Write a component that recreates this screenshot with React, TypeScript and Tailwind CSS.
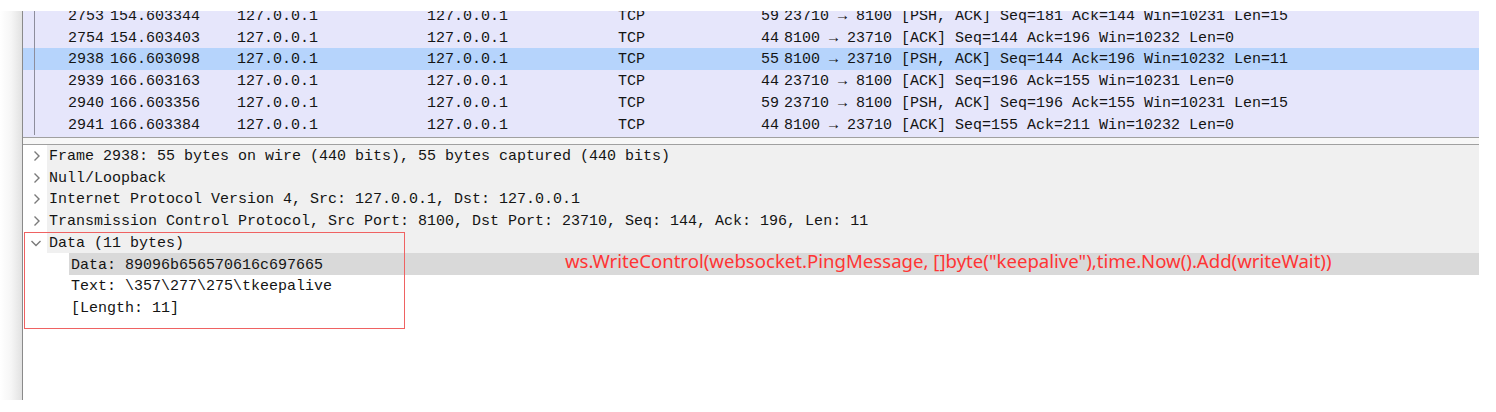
import React from 'react';

const packets = [
  { no: '2753', time: '154.603344', len: '59', info: '23710 → 8100 [PSH, ACK] Seq=181 Ack=144 Win=10231 Len=15' },
  { no: '2754', time: '154.603403', len: '44', info: '8100 → 23710 [ACK] Seq=144 Ack=196 Win=10232 Len=0' },
  { no: '2938', time: '166.603098', len: '55', info: '8100 → 23710 [PSH, ACK] Seq=144 Ack=196 Win=10232 Len=11', selected: true },
  { no: '2939', time: '166.603163', len: '44', info: '23710 → 8100 [ACK] Seq=196 Ack=155 Win=10231 Len=0' },
  { no: '2940', time: '166.603356', len: '59', info: '23710 → 8100 [PSH, ACK] Seq=196 Ack=155 Win=10231 Len=15' },
  { no: '2941', time: '166.603384', len: '44', info: '8100 → 23710 [ACK] Seq=155 Ack=211 Win=10232 Len=0' },
];

const tree = [
  'Frame 2938: 55 bytes on wire (440 bits), 55 bytes captured (440 bits)',
  'Null/Loopback',
  'Internet Protocol Version 4, Src: 127.0.0.1, Dst: 127.0.0.1',
  'Transmission Control Protocol, Src Port: 8100, Dst Port: 23710, Seq: 144, Ack: 196, Len: 11',
];

function Chevron({ open }: { open?: boolean }) {
  return (
    <svg width="12" height="12" viewBox="0 0 12 12" fill="none" stroke="#7a7a7a" strokeWidth="1.4">
      {open ? <polyline points="1.5,4 6,8.5 10.5,4" /> : <polyline points="3.5,1.5 8,6 3.5,10.5" />}
    </svg>
  );
}

export default function App() {
  return (
    <div
      className="relative h-[412px] w-[1496px] overflow-hidden bg-white text-[15px] text-[#141414]"
      style={{ fontFamily: '"Liberation Mono", "DejaVu Sans Mono", monospace' }}
    >
      <div className="h-[11px]" />

      <div className="flex h-[389px]">
        <div className="w-[22px] bg-gradient-to-r from-white via-[#f6f6f6] to-[#e2e2e2]" />

        <div className="flex w-[1457px] flex-col border-l border-[#8a8a8a]">
          {/* packet list */}
          <div className="h-[127px] shrink-0 overflow-hidden border-b border-[#a0a0a0] bg-[#e6e6fb]">
            <div className="-mt-[6px]">
              {packets.map((p) => (
                <div
                  key={p.no}
                  className={`flex h-[21.7px] items-center whitespace-pre pt-[3px] ${p.selected ? 'bg-[#b6d4fc]' : ''}`}
                >
                  <div className="-mt-[3px] h-[21.7px] w-[12px] shrink-0 border-r border-[#8d8d9c]" />
                  <div className="w-[70px] shrink-0 pr-[1px] text-right">{p.no}</div>
                  <div className="w-[132px] shrink-0 pl-[5px]">{p.time}</div>
                  <div className="w-[190px] shrink-0">127.0.0.1</div>
                  <div className="w-[191px] shrink-0">127.0.0.1</div>
                  <div className="w-[122px] shrink-0">TCP</div>
                  <div className="w-[39px] shrink-0 text-right">{p.len}</div>
                  <div className="pl-[5px]">{p.info}</div>
                </div>
              ))}
            </div>
          </div>

          {/* splitter */}
          <div className="h-[7px] shrink-0 border-b border-[#a0a0a0] bg-[#f7f7f7]" />

          {/* details tree */}
          <div className="flex-1">
            {tree.map((t) => (
              <div key={t} className="flex h-[21.7px] items-center whitespace-pre">
                <div className="flex w-[24px] shrink-0 items-center justify-center pl-[3px]">
                  <Chevron />
                </div>
                <div className="flex h-full flex-1 items-center bg-[#f0f0f0] pl-[2px] pt-[3px]">{t}</div>
              </div>
            ))}
            <div className="flex h-[21.7px] items-center whitespace-pre">
              <div className="flex w-[24px] shrink-0 items-center justify-center pl-[1px]">
                <Chevron open />
              </div>
              <div className="flex h-full flex-1 items-center bg-[#f0f0f0] pl-[2px] pt-[3px]">Data (11 bytes)</div>
            </div>
            <div className="flex h-[21.7px] items-center whitespace-pre pl-[46px]">
              <div className="flex h-full flex-1 items-center bg-[#d9d9d9] pl-[2px] pt-[3px]">Data: 89096b656570616c697665</div>
            </div>
            <div className="flex h-[21.7px] items-center whitespace-pre pl-[48px] pt-[3px]">Text: \357\277\275\tkeepalive</div>
            <div className="flex h-[21.7px] items-center whitespace-pre pl-[48px] pt-[3px]">[Length: 11]</div>
          </div>
        </div>
      </div>

      {/* annotation */}
      <div className="absolute left-[24px] top-[232px] h-[97px] w-[381px] border-[1.5px] border-[#ef6262]" />
      <div
        className="absolute left-[565px] top-[247px] whitespace-pre text-[18.6px] text-[#ff3434]"
        style={{ fontFamily: '"Noto Sans", "Open Sans", sans-serif' }}
      >
        ws.WriteControl(websocket.PingMessage, []byte("keepalive"),time.Now().Add(writeWait))
      </div>
    </div>
  );
}
